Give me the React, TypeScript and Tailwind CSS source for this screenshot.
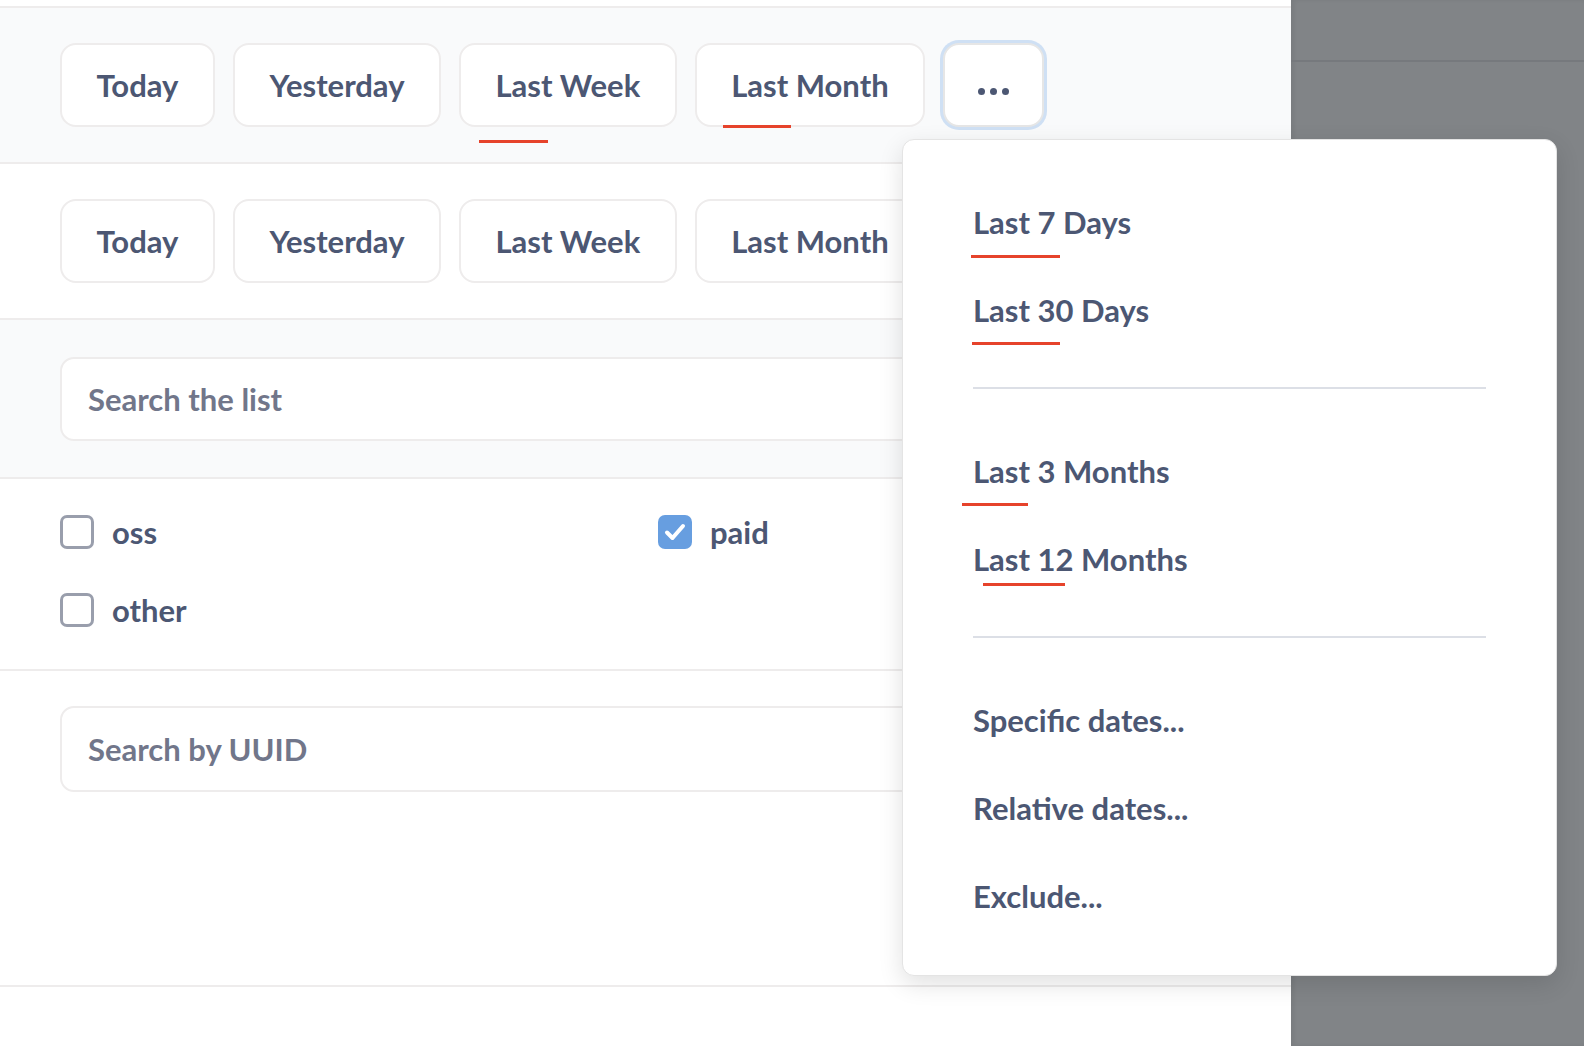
import type { ReactNode } from 'react';

const font = { fontFamily: 'Lato, "Noto Sans", sans-serif' };

type Mark = { left: number; top: number; width: number };

const Underline = ({ mark }: { mark: Mark }) => (
  <span
    className="absolute h-[3px] bg-[#e6432b]"
    style={{ left: mark.left, top: mark.top, width: mark.width }}
  />
);

const PresetButton = ({ label, mark }: { label: string; mark?: Mark }) => (
  <div className="relative">
    <button className="h-[84px] px-[34.5px] rounded-[16px] border-2 border-[#eeecec] bg-white text-[31px] font-bold text-[#4c5773] leading-none">
      {label}
    </button>
    {mark && <Underline mark={mark} />}
  </div>
);

const Section = ({ children, className }: { children: ReactNode; className: string }) => (
  <div className={`px-[60px] border-b-2 border-[#eeecec] ${className}`}>{children}</div>
);

const Checkbox = ({ label, checked }: { label: string; checked?: boolean }) => (
  <div className="flex items-center gap-[18px]">
    {checked ? (
      <span className="w-[34px] h-[34px] rounded-[7px] bg-[#679ee0] flex items-center justify-center">
        <svg width="26" height="26" viewBox="0 0 26 26" fill="none">
          <path d="M5 13.5 L10.5 19 L21 7" stroke="white" strokeWidth="4" strokeLinecap="round" strokeLinejoin="round" />
        </svg>
      </span>
    ) : (
      <span className="w-[34px] h-[34px] rounded-[7px] border-[3px] border-[#999eac] bg-white" />
    )}
    <span className="text-[31px] font-bold text-[#4c5773] leading-none">{label}</span>
  </div>
);

const MenuItem = ({ label, mark }: { label: string; mark?: Mark }) => (
  <div className="relative h-[88px] flex items-center">
    <span className="text-[31px] font-bold text-[#4c5773] leading-none">{label}</span>
    {mark && <Underline mark={mark} />}
  </div>
);

export default function App() {
  return (
    <div className="relative w-[1584px] h-[1046px] overflow-hidden flex bg-white" style={font}>
      <div className="w-[1291px] shrink-0 bg-white">
        <div className="h-[8px] border-b-2 border-[#eeecec]" />

        <Section className="bg-[#f9fafb] py-[35px]">
          <div className="flex gap-[18px]">
            <PresetButton label="Today" />
            <PresetButton label="Yesterday" />
            <PresetButton label="Last Week" mark={{ left: 20, top: 97, width: 69 }} />
            <PresetButton label="Last Month" mark={{ left: 28, top: 82, width: 68 }} />
            <button className="h-[84px] w-[101px] rounded-[16px] border-2 border-[#e6e6e6] bg-white shadow-[0_0_0_3px_#cfe0f4] flex items-center justify-center gap-[5px] pt-[12px]">
              <span className="w-[7px] h-[7px] rounded-full bg-[#4c5773]" />
              <span className="w-[7px] h-[7px] rounded-full bg-[#4c5773]" />
              <span className="w-[7px] h-[7px] rounded-full bg-[#4c5773]" />
            </button>
          </div>
        </Section>

        <Section className="bg-white py-[35px]">
          <div className="flex gap-[18px]">
            <PresetButton label="Today" />
            <PresetButton label="Yesterday" />
            <PresetButton label="Last Week" />
            <PresetButton label="Last Month" />
          </div>
        </Section>

        <Section className="bg-[#f9fafb] pt-[37px] pb-[36px]">
          <input
            placeholder="Search the list"
            className="w-full h-[84px] rounded-[14px] border-2 border-[#eeecec] bg-white px-[26px] text-[31px] font-bold text-[#4c5773] placeholder:text-[#71768a] outline-none"
          />
        </Section>

        <Section className="bg-white pt-[36px] pb-[42px]">
          <div className="grid grid-cols-[598px_1fr] gap-y-[44px]">
            <Checkbox label="oss" />
            <Checkbox label="paid" checked />
            <Checkbox label="other" />
          </div>
        </Section>

        <Section className="bg-white pt-[35px] pb-[193px]">
          <input
            placeholder="Search by UUID"
            className="w-full h-[86px] rounded-[14px] border-2 border-[#eeecec] bg-white px-[26px] text-[31px] font-bold text-[#4c5773] placeholder:text-[#71768a] outline-none"
          />
        </Section>
      </div>

      <div className="flex-1 bg-[#818487] shadow-[inset_3px_0_4px_rgba(0,0,0,0.06)]">
        <div className="h-[62px] border-b-2 border-[#76797d]" />
      </div>

      <div className="absolute left-[902px] top-[139px] w-[655px] h-[837px] rounded-[12px] border border-[#e4e4e4] bg-white shadow-[0_8px_24px_rgba(0,0,0,0.12)] px-[70px] pt-[38px]">
        <MenuItem label="Last 7 Days" mark={{ left: -2, top: 77, width: 89 }} />
        <MenuItem label="Last 30 Days" mark={{ left: -1, top: 76, width: 88 }} />
        <div className="h-[2px] bg-[#dcdfe6] mt-[33px] mb-[38px]" />
        <MenuItem label="Last 3 Months" mark={{ left: -11, top: 76, width: 66 }} />
        <MenuItem label="Last 12 Months" mark={{ left: 10, top: 68, width: 82 }} />
        <div className="h-[2px] bg-[#dcdfe6] mt-[33px] mb-[38px]" />
        <MenuItem label="Specific dates..." />
        <MenuItem label="Relative dates..." />
        <MenuItem label="Exclude..." />
      </div>
    </div>
  );
}
